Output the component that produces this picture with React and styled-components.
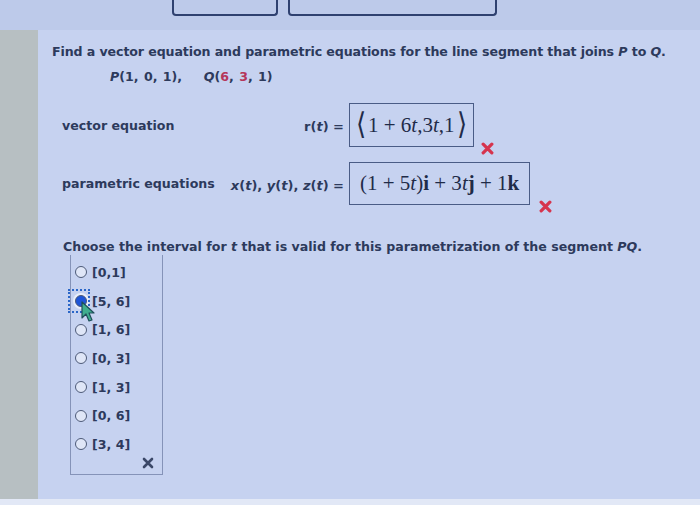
import React from "react";
import styled, { createGlobalStyle } from "styled-components";

const Global = createGlobalStyle`
  html, body {
    margin: 0;
    padding: 0;
    background: #c4d0ee;
  }
  body {
    font-family: "DejaVu Sans", Verdana, sans-serif;
    color: #2d3a5c;
  }
`;

const Page = styled.div`
  width: 700px;
  height: 505px;
  overflow: hidden;
  display: flex;
  flex-direction: column;
  background: #c4d0ee;
`;

const TopBar = styled.div`
  height: 30px;
  flex: none;
  background: #bdcaea;
  display: flex;
  align-items: flex-start;
  gap: 10px;
  padding-left: 172px;
  box-sizing: border-box;
`;

const TopButton = styled.div`
  width: ${(p) => p.w}px;
  height: 16px;
  border: 2px solid #2f4170;
  border-top: none;
  border-radius: 0 0 4px 4px;
  box-sizing: border-box;
`;

const Main = styled.div`
  flex: 1;
  display: flex;
  border-bottom: 6px solid #e2e8f6;
`;

const Rail = styled.div`
  width: 38px;
  flex: none;
  background: #b7bfc2;
`;

const Panel = styled.div`
  flex: 1;
  padding: 13px 0 0 14px;
  background: #c6d2f0;
  font-size: 13px;
`;

const Title = styled.div`
  font-weight: bold;
  font-size: 12.6px;
  letter-spacing: -0.1px;
  line-height: 18px;
`;

const Points = styled.div`
  margin: 8px 0 0 58px;
  font-size: 12.6px;
  font-weight: 600;
  word-spacing: 1px;
  i { font-style: italic; }
  span { color: #b5365a; }
`;

const Grid = styled.div`
  display: grid;
  grid-template-columns: 162px 115px auto;
  column-gap: 5px;
  row-gap: 15px;
  margin: 19px 0 0 10px;
  align-items: center;
`;

const Label = styled.div`
  font-weight: bold;
  font-size: 12.6px;
`;

const Lhs = styled.div`
  text-align: right;
  font-size: 13px;
  font-weight: bold;
  white-space: nowrap;
  margin-top: 3px;
  i { font-style: italic; }
`;

const Answer = styled.div`
  display: flex;
  align-items: flex-end;
`;

const MathBox = styled.div`
  height: ${(p) => p.h}px;
  padding: 0 ${(p) => p.pad}px;
  border: 1.5px solid #4a5c86;
  box-sizing: border-box;
  display: flex;
  align-items: center;
  font-family: "Liberation Serif", "Times New Roman", serif;
  font-size: 21px;
  color: #1f2b48;
  white-space: pre;
  i { font-style: italic; }
  b { font-weight: bold; }
`;

const Bracket = styled.span`
  font-size: 26px;
  line-height: 1;
  transform: scaleY(1.15);
  display: inline-block;
  margin: ${(p) => p.m};
`;

const Mark = styled.svg`
  flex: none;
  margin: 0 0 -8px ${(p) => p.gap}px;
`;

const Question = styled.div`
  margin: 34px 0 0 11px;
  font-weight: bold;
  font-size: 12.6px;
  i { font-style: italic; }
`;

const Choices = styled.div`
  margin: 1px 0 0 18px;
  width: 93px;
  height: 220px;
  border: 1px solid #8593b8;
  border-top: none;
  box-sizing: border-box;
  padding-top: 3px;
  display: flex;
  flex-direction: column;
  position: relative;
`;

const Option = styled.div`
  display: flex;
  align-items: center;
  gap: 5px;
  height: 28.7px;
  padding-left: 4px;
  font-size: 12.6px;
  font-weight: bold;
  position: relative;
`;

const Focus = styled.div`
  position: absolute;
  left: -3px;
  top: 2px;
  width: 22px;
  height: 24px;
  border: 2px dotted #2a66c8;
  box-sizing: border-box;
`;

const Radio = styled.span`
  width: 12px;
  height: 12px;
  border-radius: 50%;
  border: 1.5px solid #4d5a78;
  box-sizing: border-box;
  background: ${(p) => (p.on ? "#1d55d8" : "#dfe6f7")};
  box-shadow: ${(p) => (p.on ? "0 0 0 2px #e8eefb" : "none")};
  flex: none;
`;

const Cursor = styled.svg`
  position: absolute;
  left: 10px;
  top: 14px;
  z-index: 2;
`;

const GreyX = styled.svg`
  position: absolute;
  right: 8px;
  bottom: 5px;
`;

const RedX = ({ gap }) => (
  <Mark gap={gap} width="13" height="13" viewBox="0 0 12 12">
    <path d="M2 2 L10 10 M10 2 L2 10" stroke="#d6344e" strokeWidth="3" strokeLinecap="round" />
  </Mark>
);

const options = ["[0,1]", "[5, 6]", "[1, 6]", "[0, 3]", "[1, 3]", "[0, 6]", "[3, 4]"];

export default function App() {
  return (
    <Page>
      <Global />
      <TopBar>
        <TopButton w={106} />
        <TopButton w={209} />
      </TopBar>
      <Main>
        <Rail />
        <Panel>
          <Title>
            Find a vector equation and parametric equations for the line segment that joins <i>P</i> to <i>Q</i>.
          </Title>
          <Points>
            <i>P</i>(1, 0, 1),&nbsp;&nbsp;&nbsp; <i>Q</i>(<span>6</span>, <span>3</span>, 1)
          </Points>

          <Grid>
            <Label>vector equation</Label>
            <Lhs>r(<i>t</i>) =</Lhs>
            <Answer>
              <MathBox h={44} pad={6}>
                <Bracket m="0 2px 0 0">⟨</Bracket>1 + 6<i>t</i>,3<i>t</i>,1<Bracket m="0 0 0 2px">⟩</Bracket>
              </MathBox>
              <RedX gap={7} />
            </Answer>

            <Label>parametric equations</Label>
            <Lhs>
              <i>x</i>(<i>t</i>), <i>y</i>(<i>t</i>), <i>z</i>(<i>t</i>) =
            </Lhs>
            <Answer>
              <MathBox h={43} pad={10}>
                (1 + 5<i>t</i>)<b>i</b> + 3<i>t</i><b>j</b> + 1<b>k</b>
              </MathBox>
              <RedX gap={9} />
            </Answer>
          </Grid>

          <Question>
            Choose the interval for <i>t</i> that is valid for this parametrization of the segment <i>PQ</i>.
          </Question>
          <Choices>
            {options.map((o, i) => (
              <Option key={o}>
                {i === 1 && <Focus />}
                <Radio on={i === 1} />
                {o}
                {i === 1 && (
                  <Cursor width="16" height="22" viewBox="0 0 16 22">
                    <path
                      d="M1 1 L1 17 L5 13 L8 20 L11 19 L8 12 L13 12 Z"
                      fill="#3fae8e"
                      stroke="#1f4f5a"
                      strokeWidth="1.2"
                      strokeLinejoin="round"
                    />
                  </Cursor>
                )}
              </Option>
            ))}
            <GreyX width="12" height="12" viewBox="0 0 12 12">
              <path d="M2 2 L10 10 M10 2 L2 10" stroke="#3b4868" strokeWidth="2.6" strokeLinecap="round" />
            </GreyX>
          </Choices>
        </Panel>
      </Main>
    </Page>
  );
}
